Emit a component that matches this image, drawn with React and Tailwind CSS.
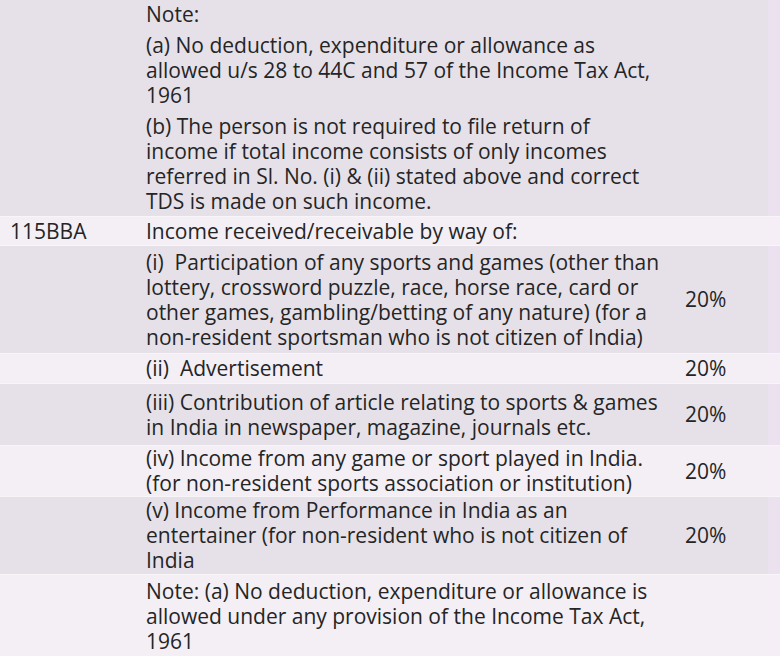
import React from 'react';

// rate table rows, lines broken the same way as the printed circular
const rows = [
  {
    tone: 'dark',
    pad: 'pt-[2px] pb-[2px]',
    paras: [
      ['Note:'],
      [
        '(a) No deduction, expenditure or allowance as',
        'allowed u/s 28 to 44C and 57 of the Income Tax Act,',
        '1961',
      ],
      [
        '(b) The person is not required to file return of',
        'income if total income consists of only incomes',
        'referred in Sl. No. (i) & (ii) stated above and correct',
        'TDS is made on such income.',
      ],
    ],
  },
  {
    tone: 'light',
    code: '115BBA',
    pad: 'pt-[2px] pb-[1px]',
    paras: [['Income received/receivable by way of:']],
  },
  {
    tone: 'dark',
    pad: 'pt-[4px] pb-[3px]',
    rate: '20%',
    paras: [
      [
        '(i)\u00a0 Participation of any sports and games (other than',
        'lottery, crossword puzzle, race, horse race, card or',
        'other games, gambling/betting of any nature) (for a',
        'non-resident sportsman who is not citizen of India)',
      ],
    ],
  },
  {
    tone: 'light',
    pad: 'pt-[2px] pb-[2px]',
    rate: '20%',
    paras: [['(ii)\u00a0 Advertisement']],
  },
  {
    tone: 'dark',
    pad: 'pt-[6px] pb-[5px]',
    rate: '20%',
    paras: [
      [
        '(iii) Contribution of article relating to sports & games',
        'in India in newspaper, magazine, journals etc.',
      ],
    ],
  },
  {
    tone: 'light',
    pad: 'pt-[0px] pb-[0px]',
    rate: '20%',
    paras: [
      [
        '(iv) Income from any game or sport played in India.',
        '(for non-resident sports association or institution)',
      ],
    ],
  },
  {
    tone: 'dark',
    pad: 'pt-[1px] pb-[1px]',
    rate: '20%',
    paras: [
      [
        '(v) Income from Performance in India as an',
        'entertainer (for non-resident who is not citizen of',
        'India',
      ],
    ],
  },
  {
    tone: 'light',
    pad: 'pt-[4px] pb-[2px]',
    paras: [
      [
        'Note: (a) No deduction, expenditure or allowance is',
        'allowed under any provision of the Income Tax Act,',
        '1961',
      ],
    ],
  },
];

function Row({ row }) {
  const dark = row.tone === 'dark';
  return (
    <div className={`flex ${dark ? 'bg-[#e6e1e9]' : 'bg-[#f3eff5]'}`}>
      <div className={`w-[143px] shrink-0 pl-[10px] ${row.pad}`}>{row.code}</div>
      <div className={`w-[527px] shrink-0 pl-[3px] flex flex-col gap-[6px] ${row.pad}`}>
        {row.paras.map((lines, i) => (
          <p key={i} className="whitespace-nowrap">
            {lines.map((l, j) => (
              <React.Fragment key={j}>
                {j > 0 && <br />}
                {l}
              </React.Fragment>
            ))}
          </p>
        ))}
      </div>
      <div className="w-[98px] shrink-0 pl-[15px] flex items-center">{row.rate}</div>
      <div className={`flex-1 ${dark ? 'bg-[#ebe1ef]' : 'bg-[#f5eef7]'}`}></div>
    </div>
  );
}

export default function App() {
  return (
    <div
      className="w-[780px] min-h-[660px] bg-white text-[#252525] text-[21px] leading-[25px]"
      style={{ fontFamily: '"Open Sans", "Noto Sans", sans-serif' }}
    >
      <div className="flex flex-col gap-[1px] bg-[#f8f5f9]">
        {rows.map((r, i) => (
          <Row key={i} row={r} />
        ))}
      </div>
    </div>
  );
}
